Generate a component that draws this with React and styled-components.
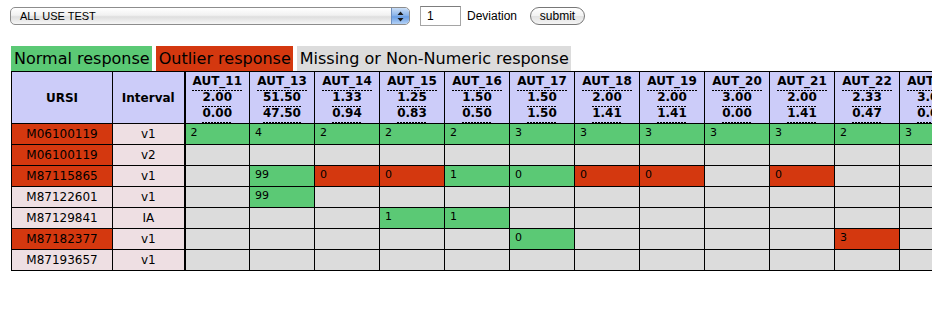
import React from 'react';
import styled, { createGlobalStyle } from 'styled-components';

const COLORS = {
  normal: '#5bc975',
  outlier: '#d4380f',
  missing: '#dcdcdc',
  header: '#ccccf9',
  subject: '#eedfe3',
  line: '#000',
};

const ITEMS = [
  ['AUT_11', '2.00', '0.00'],
  ['AUT_13', '51.50', '47.50'],
  ['AUT_14', '1.33', '0.94'],
  ['AUT_15', '1.25', '0.83'],
  ['AUT_16', '1.50', '0.50'],
  ['AUT_17', '1.50', '1.50'],
  ['AUT_18', '2.00', '1.41'],
  ['AUT_19', '2.00', '1.41'],
  ['AUT_20', '3.00', '0.00'],
  ['AUT_21', '2.00', '1.41'],
  ['AUT_22', '2.33', '0.47'],
  ['AUT_23', '3.00', '0.00'],
];

// n = normal, o = outlier, null = missing
const ROWS = [
  { ursi: 'M06100119', interval: 'v1', outlier: true,
    cells: [['n', 2], ['n', 4], ['n', 2], ['n', 2], ['n', 2], ['n', 3], ['n', 3], ['n', 3], ['n', 3], ['n', 3], ['n', 2], ['n', 3]] },
  { ursi: 'M06100119', interval: 'v2', outlier: true, cells: [] },
  { ursi: 'M87115865', interval: 'v1', outlier: true,
    cells: [null, ['n', 99], ['o', 0], ['o', 0], ['n', 1], ['n', 0], ['o', 0], ['o', 0], null, ['o', 0]] },
  { ursi: 'M87122601', interval: 'v1', cells: [null, ['n', 99]] },
  { ursi: 'M87129841', interval: 'IA', cells: [null, null, null, ['n', 1], ['n', 1]] },
  { ursi: 'M87182377', interval: 'v1', outlier: true,
    cells: [null, null, null, null, null, ['n', 0], null, null, null, null, ['o', 3]] },
  { ursi: 'M87193657', interval: 'v1', cells: [] },
];

const GlobalStyle = createGlobalStyle`
  body {
    margin: 0;
    background: #fff;
    overflow: hidden;
    font-family: "DejaVu Sans", Verdana, sans-serif;
  }
`;

const Page = styled.div`
  padding: 6px 0 0 10px;
`;

const Form = styled.form`
  display: flex;
  align-items: center;
  height: 20px;
  font-family: "Liberation Sans", Arial, sans-serif;
  font-size: 12px;
  color: #000;
`;

const Select = styled.div`
  position: relative;
  box-sizing: border-box;
  width: 400px;
  height: 18px;
  display: flex;
  align-items: center;
  padding-left: 9px;
  border: 1px solid #8c8c8c;
  border-radius: 5px;
  background: linear-gradient(#ffffff, #f1f1f1 45%, #dedede 55%, #f6f6f6);
  font-size: 11px;
  overflow: hidden;
`;

const Stepper = styled.div`
  position: absolute;
  top: 0;
  right: 0;
  bottom: 0;
  width: 17px;
  border-left: 1px solid #6d8fc0;
  border-radius: 0 4px 4px 0;
  background: linear-gradient(#c9ddf6, #8db6ea 45%, #6a9ee3 55%, #b3d1f6);
  display: flex;
  align-items: center;
  justify-content: center;
`;

const NumberInput = styled.input`
  box-sizing: border-box;
  margin-left: 10px;
  width: 41px;
  height: 20px;
  padding: 0 6px;
  border: 1px solid #a5a5a5;
  border-top-color: #7d7d7d;
  font: inherit;
  font-size: 12px;
`;

const Label = styled.span`
  margin-left: 6px;
`;

const Button = styled.button`
  box-sizing: border-box;
  margin-left: 13px;
  width: 55px;
  height: 18px;
  padding: 0;
  border: 1px solid #777;
  border-radius: 9px;
  background: linear-gradient(#ffffff, #f2f2f2 50%, #e2e2e2 51%, #f4f4f4);
  font: inherit;
  font-size: 12px;
  color: #000;
`;

const Legend = styled.div`
  display: flex;
  gap: 4px;
  margin: 20px 0 0 1px;
`;

const Key = styled.span`
  padding: 3px 2px 3px 3px;
  font-size: 16px;
  line-height: 19px;
  background: ${p => COLORS[p.kind]};
`;

const Table = styled.table`
  margin-left: 1px;
  border-collapse: collapse;
  table-layout: fixed;
  width: ${101 + 72 + 65 * ITEMS.length}px;
  border: 1px solid ${COLORS.line};
`;

const Head = styled.th`
  height: 51px;
  padding: 0;
  background: ${COLORS.header};
  border: 1px solid ${COLORS.line};
  border-right-width: ${p => (p.split ? '2px' : '1px')};
  font-size: 12px;
  font-weight: bold;
  text-align: center;
  vertical-align: ${p => (p.stats ? 'bottom' : 'middle')};
`;

// mean / sd lines carry a dashed rule under them, like an abbr
const Stat = styled.span`
  display: block;
  width: fit-content;
  margin: 0 auto;
  line-height: 12px;
  padding-bottom: 4px;
  background: repeating-linear-gradient(to right, #000 0 2px, transparent 2px 3px) left bottom / 100% 1px no-repeat;
`;

const Subject = styled.td`
  height: 20px;
  padding: 0;
  border: 1px solid ${COLORS.line};
  border-right-width: ${p => (p.split ? '2px' : '1px')};
  background: ${p => (p.outlier ? COLORS.outlier : COLORS.subject)};
  font-size: 12px;
  text-align: center;
  vertical-align: middle;
`;

const Score = styled.td`
  padding: 2px 5px 0;
  border: 1px solid ${COLORS.line};
  background: ${p => COLORS[p.kind]};
  font-size: 11px;
  text-align: left;
  vertical-align: top;
`;

const KIND = { n: 'normal', o: 'outlier' };

export default function App() {
  return (
    <Page>
      <GlobalStyle />
      <Form onSubmit={e => e.preventDefault()}>
        <Select>
          ALL USE TEST
          <Stepper>
            <svg width="7" height="11" viewBox="0 0 7 11">
              <path d="M3.5 0.5 L6.5 4 H0.5 Z M3.5 10.5 L6.5 7 H0.5 Z" fill="#1a1a1a" />
            </svg>
          </Stepper>
        </Select>
        <NumberInput defaultValue="1" />
        <Label>Deviation</Label>
        <Button type="submit">submit</Button>
      </Form>
      <Legend>
        <Key kind="normal">Normal response</Key>
        <Key kind="outlier">Outlier response</Key>
        <Key kind="missing">Missing or Non-Numeric response</Key>
      </Legend>
      <Table>
        <colgroup>
          <col style={{ width: 101 }} />
          <col style={{ width: 72 }} />
          {ITEMS.map(item => <col key={item[0]} style={{ width: 65 }} />)}
        </colgroup>
        <thead>
          <tr>
            <Head>URSI</Head>
            <Head split>Interval</Head>
            {ITEMS.map(([name, mean, sd]) => (
              <Head key={name} stats>
                <Stat>{name}</Stat>
                <Stat>{mean}</Stat>
                <Stat>{sd}</Stat>
              </Head>
            ))}
          </tr>
        </thead>
        <tbody>
          {ROWS.map((row, r) => (
            <tr key={r}>
              <Subject outlier={row.outlier}>{row.ursi}</Subject>
              <Subject split>{row.interval}</Subject>
              {ITEMS.map((item, i) => {
                const cell = row.cells[i];
                return cell
                  ? <Score key={item[0]} kind={KIND[cell[0]]}>{cell[1]}</Score>
                  : <Score key={item[0]} kind="missing" />;
              })}
            </tr>
          ))}
        </tbody>
      </Table>
    </Page>
  );
}
